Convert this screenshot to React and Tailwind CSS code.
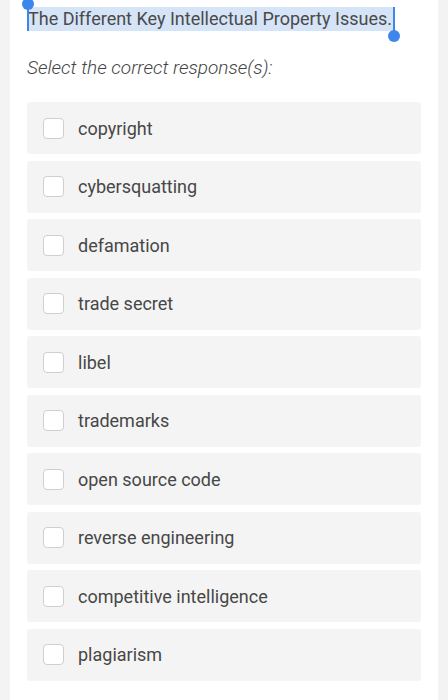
import React from "react";

const options = [
  "copyright",
  "cybersquatting",
  "defamation",
  "trade secret",
  "libel",
  "trademarks",
  "open source code",
  "reverse engineering",
  "competitive intelligence",
  "plagiarism",
];

export default function App() {
  return (
    <div className="w-[448px] h-[700px] overflow-hidden bg-[#f3f3f3] px-[10px]" style={{ fontFamily: "Roboto, 'Liberation Sans', sans-serif" }}>
      <div className="h-full bg-white px-[17px]">
        <div className="relative pt-[7px]">
          <span className="relative inline-block bg-[#d6e4f8] text-[18px] leading-[24px] text-[#4a4a4a] pl-[1px] pr-[1px]">
            The Different Key Intellectual Property Issues.
            <span className="absolute left-0 top-[-7px] w-[2px] h-[31px] bg-[#3d86ec]"></span>
            <span className="absolute left-[-5px] top-[-9px] w-[12px] h-[12px] rounded-full bg-[#3d86ec]"></span>
            <span className="absolute right-[-2px] top-0 w-[2px] h-[28px] bg-[#3d86ec]"></span>
            <span className="absolute right-[-7px] top-[23px] w-[12px] h-[12px] rounded-full bg-[#3d86ec]"></span>
          </span>
        </div>
        <div className="mt-[24px] text-[19px] leading-[24px] italic font-light text-[#444]">
          Select the correct response(s):
        </div>
        <div className="mt-[22px] flex flex-col gap-[6.5px]">
          {options.map((o) => (
            <div key={o} className="h-[52px] bg-[#f4f4f4] rounded-[3px] flex items-center pl-[16px]">
              <div className="w-[21px] h-[21px] rounded-[4px] border border-[#cfcfcf] bg-white"></div>
              <span className="ml-[14px] text-[18px] text-[#474747]">{o}</span>
            </div>
          ))}
        </div>
      </div>
    </div>
  );
}
